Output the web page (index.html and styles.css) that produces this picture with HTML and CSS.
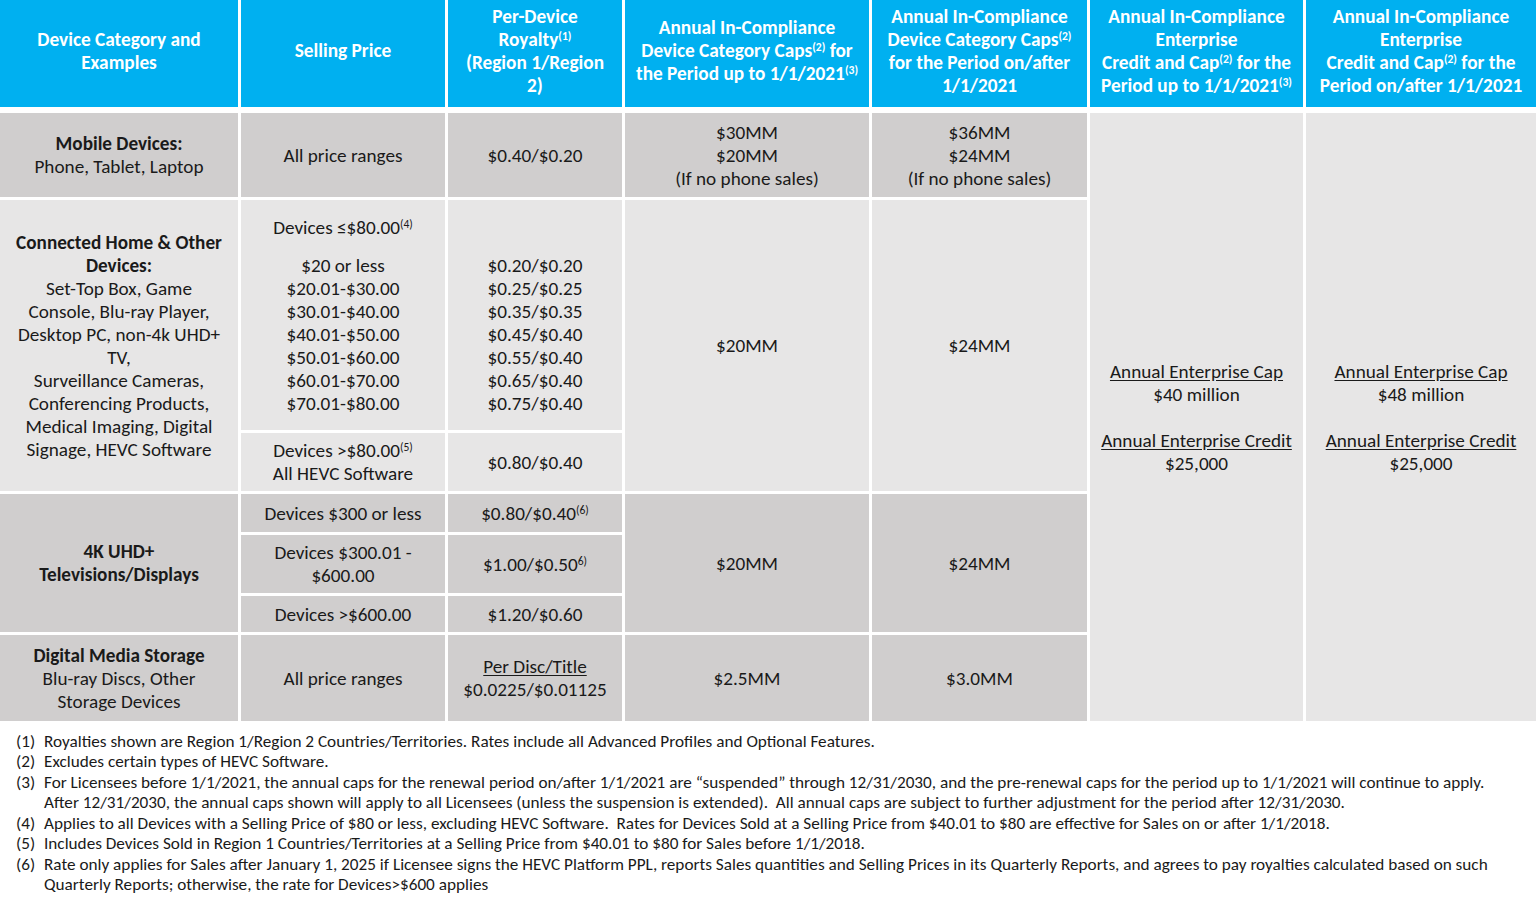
FILE: index.html
```html
<!DOCTYPE html>
<html lang="en">
<head>
<meta charset="utf-8">
<title>HEVC Royalty Rates</title>
<link rel="stylesheet" href="styles.css">
</head>
<body>
<div class="sheet">
  <div class="grid">
    <div class="cell head"><p class="in">Device Category and<br>Examples</p></div>
    <div class="cell head"><p class="in">Selling Price</p></div>
    <div class="cell head"><p class="in">Per-Device<br>Royalty<sup>(1)</sup><br>(Region 1/Region<br>2)</p></div>
    <div class="cell head"><p class="in">Annual In-Compliance<br>Device Category Caps<sup>(2)</sup> for<br>the Period up to 1/1/2021<sup>(3)</sup></p></div>
    <div class="cell head"><p class="in">Annual In-Compliance<br>Device Category Caps<sup>(2)</sup><br>for the Period on/after<br>1/1/2021</p></div>
    <div class="cell head"><p class="in">Annual In-Compliance<br>Enterprise<br>Credit and Cap<sup>(2)</sup> for the<br>Period up to 1/1/2021<sup>(3)</sup></p></div>
    <div class="cell head"><p class="in">Annual In-Compliance<br>Enterprise<br>Credit and Cap<sup>(2)</sup> for the<br>Period on/after 1/1/2021</p></div>

    <div class="cell dark"><p class="in"><b>Mobile Devices:</b><br>Phone, Tablet, Laptop</p></div>
    <div class="cell dark"><p class="in">All price ranges</p></div>
    <div class="cell dark"><p class="in">$0.40/$0.20</p></div>
    <div class="cell dark"><p class="in">$30MM<br>$20MM<br>(If no phone sales)</p></div>
    <div class="cell dark"><p class="in">$36MM<br>$24MM<br>(If no phone sales)</p></div>
    <div class="cell light span-7">
      <div class="in">
        <p class="ent"><u>Annual Enterprise Cap</u><br>$40 million</p>
        <p class="ent"><u>Annual Enterprise Credit</u><br>$25,000</p>
      </div>
    </div>
    <div class="cell light span-7">
      <div class="in">
        <p class="ent"><u>Annual Enterprise Cap</u><br>$48 million</p>
        <p class="ent"><u>Annual Enterprise Credit</u><br>$25,000</p>
      </div>
    </div>

    <div class="cell light span-2"><p class="in"><b>Connected Home &amp; Other<br>Devices:</b><br>Set-Top Box, Game<br>Console, Blu-ray Player,<br>Desktop PC, non-4k UHD+<br>TV,<br>Surveillance Cameras,<br>Conferencing Products,<br>Medical Imaging, Digital<br>Signage, HEVC Software</p></div>
    <div class="cell light">
      <div class="in">
        <p class="tier">Devices ≤$80.00<sup>(4)</sup></p>
        <p class="list">$20 or less<br>$20.01-$30.00<br>$30.01-$40.00<br>$40.01-$50.00<br>$50.01-$60.00<br>$60.01-$70.00<br>$70.01-$80.00</p>
      </div>
    </div>
    <div class="cell light">
      <div class="in">
        <p class="tier">&nbsp;</p>
        <p class="list">$0.20/$0.20<br>$0.25/$0.25<br>$0.35/$0.35<br>$0.45/$0.40<br>$0.55/$0.40<br>$0.65/$0.40<br>$0.75/$0.40</p>
      </div>
    </div>
    <div class="cell light span-2"><p class="in">$20MM</p></div>
    <div class="cell light span-2"><p class="in">$24MM</p></div>
    <div class="cell light"><p class="in">Devices &gt;$80.00<sup>(5)</sup><br>All HEVC Software</p></div>
    <div class="cell light"><p class="in">$0.80/$0.40</p></div>

    <div class="cell dark span-3"><p class="in"><b>4K UHD+<br>Televisions/Displays</b></p></div>
    <div class="cell dark"><p class="in">Devices $300 or less</p></div>
    <div class="cell dark"><p class="in">$0.80/$0.40<sup>(6)</sup></p></div>
    <div class="cell dark span-3"><p class="in">$20MM</p></div>
    <div class="cell dark span-3"><p class="in">$24MM</p></div>
    <div class="cell dark"><p class="in">Devices $300.01 -<br>$600.00</p></div>
    <div class="cell dark"><p class="in">$1.00/$0.50<sup>6)</sup></p></div>
    <div class="cell dark"><p class="in">Devices &gt;$600.00</p></div>
    <div class="cell dark"><p class="in">$1.20/$0.60</p></div>

    <div class="cell dark"><p class="in"><b>Digital Media Storage</b><br>Blu-ray Discs, Other<br>Storage Devices</p></div>
    <div class="cell dark"><p class="in">All price ranges</p></div>
    <div class="cell dark"><p class="in"><u>Per Disc/Title</u><br>$0.0225/$0.01125</p></div>
    <div class="cell dark"><p class="in">$2.5MM</p></div>
    <div class="cell dark"><p class="in">$3.0MM</p></div>
  </div>

  <div class="notes">
    <div class="note"><span class="num">(1)</span><span class="txt">Royalties shown are Region 1/Region 2 Countries/Territories. Rates include all Advanced Profiles and Optional Features.</span></div>
    <div class="note"><span class="num">(2)</span><span class="txt">Excludes certain types of HEVC Software.</span></div>
    <div class="note"><span class="num">(3)</span><span class="txt">For Licensees before 1/1/2021, the annual caps for the renewal period on/after 1/1/2021 are “suspended” through 12/31/2030, and the pre-renewal caps for the period up to 1/1/2021 will continue to apply.<br>After 12/31/2030, the annual caps shown will apply to all Licensees (unless the suspension is extended).&nbsp; All annual caps are subject to further adjustment for the period after 12/31/2030.</span></div>
    <div class="note"><span class="num">(4)</span><span class="txt">Applies to all Devices with a Selling Price of $80 or less, excluding HEVC Software.&nbsp; Rates for Devices Sold at a Selling Price from $40.01 to $80 are effective for Sales on or after 1/1/2018.</span></div>
    <div class="note"><span class="num">(5)</span><span class="txt">Includes Devices Sold in Region 1 Countries/Territories at a Selling Price from $40.01 to $80 for Sales before 1/1/2018.</span></div>
    <div class="note"><span class="num">(6)</span><span class="txt">Rate only applies for Sales after January 1, 2025 if Licensee signs the HEVC Platform PPL, reports Sales quantities and Selling Prices in its Quarterly Reports, and agrees to pay royalties calculated based on such<br>Quarterly Reports; otherwise, the rate for Devices&gt;$600 applies</span></div>
  </div>
</div>
</body>
</html>
```

FILE: styles.css
```css
html, body {
  margin: 0;
  padding: 0;
  background: #ffffff;
}

body {
  font-family: Carlito, Lato, "Liberation Sans", sans-serif;
  color: #1a1a1a;
}

p {
  margin: 0;
}

.sheet {
  width: 1536px;
  height: 905px;
  overflow: hidden;
  background: #ffffff;
}

.grid {
  display: grid;
  grid-template-columns: 238px 204px 174px 244px 215px 213px 230px;
  grid-template-rows: 110px 84px 230px 58px 38px 58px 36px 86px;
  gap: 3px;
  background: #ffffff;
}

.cell {
  display: flex;
  align-items: center;
  justify-content: center;
  text-align: center;
  font-size: 19.2px;
  line-height: 23px;
  white-space: nowrap;
}

.head {
  background: #00b0f0;
  color: #ffffff;
  font-weight: 700;
  font-size: 19.3px;
  margin-bottom: 3px;
  padding-bottom: 6px;
}

.dark {
  background: #d0cece;
}

.light {
  background: #e7e6e6;
}

.span-2 { grid-row: span 2; }
.span-3 { grid-row: span 3; }
.span-7 { grid-row: span 7; }

.tier {
  margin-bottom: 15px;
}

.ent + .ent {
  margin-top: 23px;
}

sup {
  font-size: 0.6em;
  line-height: 0;
  vertical-align: 0.55em;
}

b {
  font-weight: 700;
}

u {
  text-decoration: underline;
  text-underline-offset: 2px;
}

.notes {
  padding: 10.5px 0 0 16px;
  font-size: 17.2px;
  line-height: 20.5px;
}

.note {
  display: flex;
}

.num {
  width: 28px;
  flex: none;
}

.txt {
  white-space: nowrap;
}
```
